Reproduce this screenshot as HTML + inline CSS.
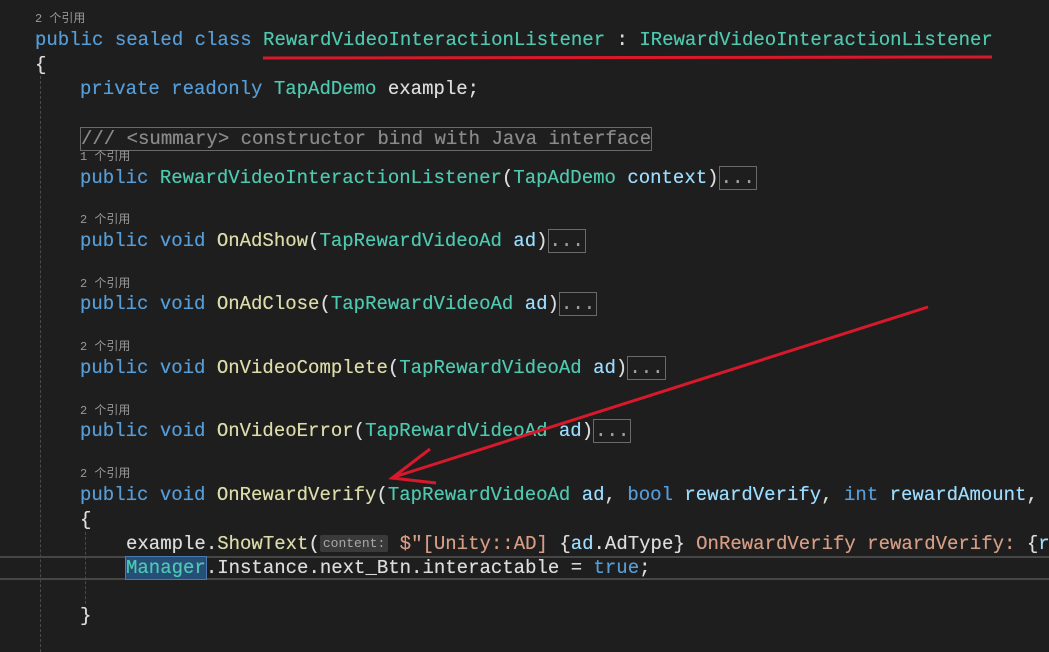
<!DOCTYPE html><html><head><meta charset="utf-8"><style>
body{margin:0;width:1049px;height:652px;background:#1e1e1e;overflow:hidden;position:relative;font-family:"Liberation Mono","Noto Sans CJK SC",monospace;}
.l{position:absolute;white-space:pre;font-size:19px;line-height:24px;height:24px;color:#dcdcdc;text-shadow:0 0 0.4px currentColor;}
.n{position:absolute;white-space:pre;font-size:12px;line-height:13px;color:#999;font-family:"Liberation Mono","Noto Sans CJK SC",monospace;}
.k{color:#569cd6}.t{color:#4ec9b0}.m{color:#dcdcaa}.p{color:#9cdcfe}.s{color:#d69d85}.c{color:#8a8a8a}
.e{border:1px solid #6a6a6a;color:#a0a0a0;padding:0 1px}
.g{position:absolute;border-left:1px dashed #4a4a4a;width:0}
.h{background:#3a3a3a;color:#a8a8a8;font-size:13px;border-radius:2px;padding:1px 3px;vertical-align:2px;text-shadow:none}
</style></head><body>
<div class="g" style="left:40px;top:76px;height:576px"></div>
<div class="g" style="left:85px;top:532px;height:72px"></div>
<div style="position:absolute;left:0;top:556px;width:1049px;height:24px;border-top:2px solid #464646;border-bottom:2px solid #464646;box-sizing:border-box"></div>
<div class="n" style="left:35px;top:13px">2 个引用</div>
<div class="l" style="left:35px;top:28px"><span class="k">public sealed class</span> <span class="t">RewardVideoInteractionListener</span> : <span class="t">IRewardVideoInteractionListener</span></div>
<div class="l" style="left:35px;top:53px">{</div>
<div class="l" style="left:80px;top:77px"><span class="k">private readonly</span> <span class="t">TapAdDemo</span> example;</div>
<div class="l" style="left:80px;top:127px"><span class="c" style="border:1px solid #6a6a6a">/// &lt;summary&gt; constructor bind with Java interface</span></div>
<div class="n" style="left:80px;top:151px">1 个引用</div>
<div class="l" style="left:80px;top:166px"><span class="k">public</span> <span class="t">RewardVideoInteractionListener</span>(<span class="t">TapAdDemo</span> <span class="p">context</span>)<span class="e">...</span></div>
<div class="n" style="left:80px;top:214px">2 个引用</div>
<div class="l" style="left:80px;top:229px"><span class="k">public void</span> <span class="m">OnAdShow</span>(<span class="t">TapRewardVideoAd</span> <span class="p">ad</span>)<span class="e">...</span></div>
<div class="n" style="left:80px;top:278px">2 个引用</div>
<div class="l" style="left:80px;top:292px"><span class="k">public void</span> <span class="m">OnAdClose</span>(<span class="t">TapRewardVideoAd</span> <span class="p">ad</span>)<span class="e">...</span></div>
<div class="n" style="left:80px;top:341px">2 个引用</div>
<div class="l" style="left:80px;top:356px"><span class="k">public void</span> <span class="m">OnVideoComplete</span>(<span class="t">TapRewardVideoAd</span> <span class="p">ad</span>)<span class="e">...</span></div>
<div class="n" style="left:80px;top:405px">2 个引用</div>
<div class="l" style="left:80px;top:419px"><span class="k">public void</span> <span class="m">OnVideoError</span>(<span class="t">TapRewardVideoAd</span> <span class="p">ad</span>)<span class="e">...</span></div>
<div class="n" style="left:80px;top:468px">2 个引用</div>
<div class="l" style="left:80px;top:483px"><span class="k">public void</span> <span class="m">OnRewardVerify</span>(<span class="t">TapRewardVideoAd</span> <span class="p">ad</span>, <span class="k">bool</span> <span class="p">rewardVerify</span>, <span class="k">int</span> <span class="p">rewardAmount</span>,</div>
<div class="l" style="left:80px;top:508px">{</div>
<div class="l" style="left:126px;top:532px">example.<span class="m">ShowText</span>(<span class="h">content:</span> <span class="s">$"[Unity::AD] </span>{<span class="p">ad</span>.AdType} <span class="s">OnRewardVerify rewardVerify: </span>{<span class="p">r</span></div>
<div class="l" style="left:126px;top:556px"><span class="t" style="background:#264f78;outline:1px solid #4a7ab0">Manager</span>.Instance.next_Btn.interactable = <span class="k">true</span>;</div>
<div class="l" style="left:80px;top:604px">}</div>
<svg style="position:absolute;left:0;top:0" width="1049" height="652">
<line x1="263" y1="58" x2="992" y2="57" stroke="#d8192c" stroke-width="3"/>
<line x1="928" y1="307" x2="394" y2="477" stroke="#d8192c" stroke-width="3"/>
<polyline points="430,449 392,478 436,483" fill="none" stroke="#d8192c" stroke-width="3"/>
</svg>
</body></html>
